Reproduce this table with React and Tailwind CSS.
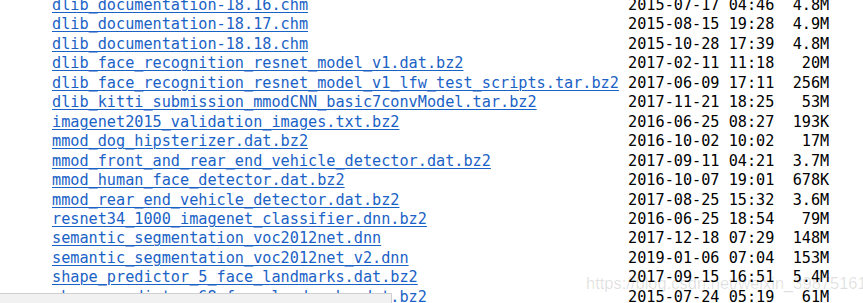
const rows = [
  ["dlib_documentation-18.16.chm", "2015-07-17 04:46", "4.8M"],
  ["dlib_documentation-18.17.chm", "2015-08-15 19:28", "4.9M"],
  ["dlib_documentation-18.18.chm", "2015-10-28 17:39", "4.8M"],
  ["dlib_face_recognition_resnet_model_v1.dat.bz2", "2017-02-11 11:18", "20M"],
  ["dlib_face_recognition_resnet_model_v1_lfw_test_scripts.tar.bz2", "2017-06-09 17:11", "256M"],
  ["dlib_kitti_submission_mmodCNN_basic7convModel.tar.bz2", "2017-11-21 18:25", "53M"],
  ["imagenet2015_validation_images.txt.bz2", "2016-06-25 08:27", "193K"],
  ["mmod_dog_hipsterizer.dat.bz2", "2016-10-02 10:02", "17M"],
  ["mmod_front_and_rear_end_vehicle_detector.dat.bz2", "2017-09-11 04:21", "3.7M"],
  ["mmod_human_face_detector.dat.bz2", "2016-10-07 19:01", "678K"],
  ["mmod_rear_end_vehicle_detector.dat.bz2", "2017-08-25 15:32", "3.6M"],
  ["resnet34_1000_imagenet_classifier.dnn.bz2", "2016-06-25 18:54", "79M"],
  ["semantic_segmentation_voc2012net.dnn", "2017-12-18 07:29", "148M"],
  ["semantic_segmentation_voc2012net_v2.dnn", "2019-01-06 07:04", "153M"],
  ["shape_predictor_5_face_landmarks.dat.bz2", "2017-09-15 16:51", "5.4M"],
  ["shape_predictor_68_face_landmarks.dat.bz2", "2015-07-24 05:19", "61M"],
];

export default function App() {
  return (
    <div className="relative w-[863px] h-[303px] overflow-hidden bg-white">
      <pre className="-mt-[4px] pl-[52px] m-0 text-[15.2px] leading-[19.45px] text-black whitespace-pre" style={{ fontFamily: '"DejaVu Sans Mono", monospace' }}>
        {rows.map(([name, dt, size]) => (
          <div key={name}>
            <a href="#" className="text-[#1a62c6] underline underline-offset-[2px] decoration-[1px]">{name}</a>
            {" ".repeat(63 - name.length)}
            {dt}
            {size.padStart(6, " ")}
          </div>
        ))}
      </pre>
      <div className="absolute left-[586px] top-[273px] text-[16.5px] leading-[20px] text-black/[0.13]" style={{ fontFamily: '"Liberation Sans", Arial, sans-serif' }}>
        https://blog.csdn.net/weixin_39875161
      </div>
      <div className="absolute left-0 bottom-0 w-[392px] h-[10px] bg-[#f1f1f1] border-t border-r border-[#cfcfcf]" />
    </div>
  );
}
